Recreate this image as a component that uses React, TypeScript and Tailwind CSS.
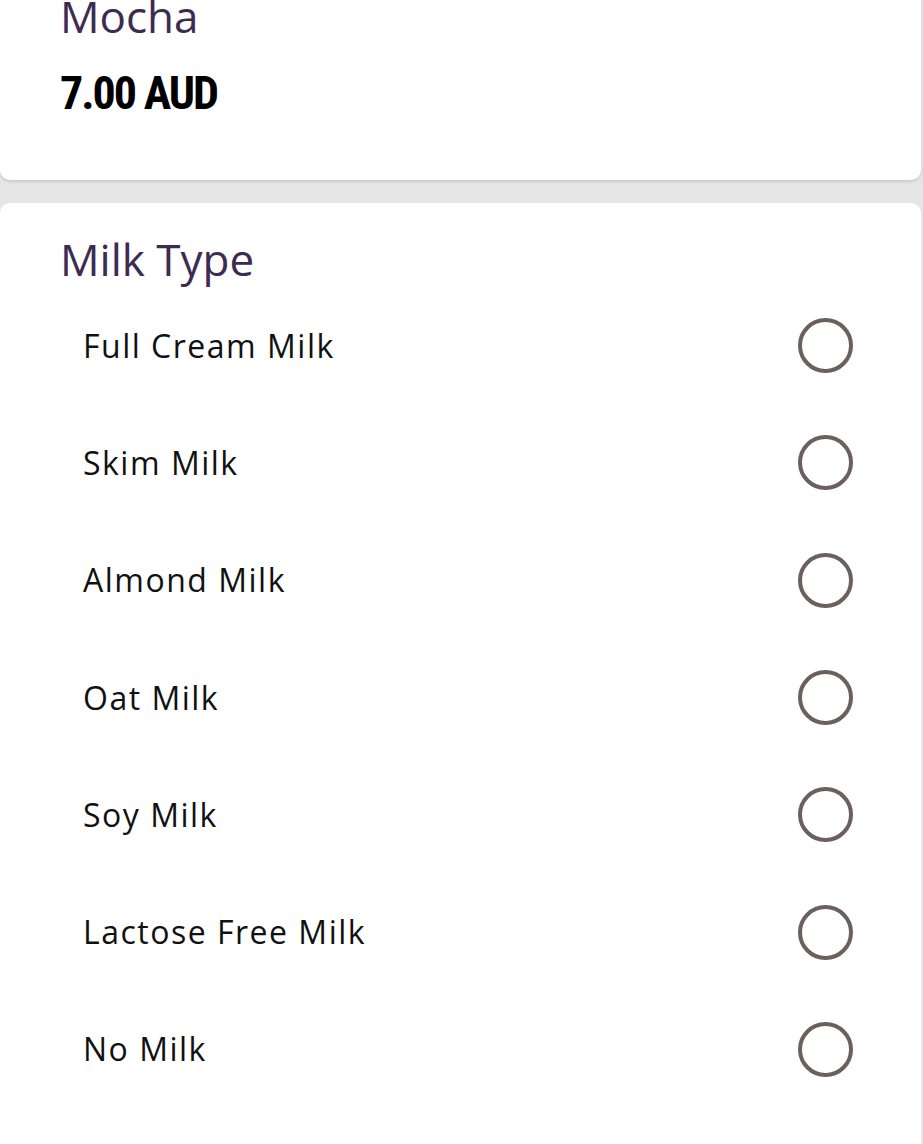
const MILKS = [
  "Full Cream Milk",
  "Skim Milk",
  "Almond Milk",
  "Oat Milk",
  "Soy Milk",
  "Lactose Free Milk",
  "No Milk",
];

export default function App() {
  return (
    <div className="min-h-[1144px] bg-[#e6e6e6] font-['Open_Sans','Liberation_Sans',sans-serif] overflow-hidden">
      <div className="mr-[2px] -mt-[6px] rounded-b-[10px] bg-white pl-[60px] pb-[64px] shadow-[0_2px_3px_rgba(0,0,0,0.12)]">
        <h1 className="text-[44px] leading-[44px] text-[#3d2b52]">Mocha</h1>
        <p className="mt-[32px] font-['Liberation_Sans_Narrow','Roboto_Condensed','Liberation_Sans',sans-serif] text-[46px] font-bold leading-[46px] tracking-[-2px] text-black">
          7.00 AUD
        </p>
      </div>

      <div className="mt-[23px] mr-[2px] min-h-[960px] rounded-t-[10px] bg-white pt-[34px]">
        <h2 className="pl-[60px] text-[44px] leading-[44px] text-[#3d2b52]">Milk Type</h2>
        <ul className="mt-[6px]">
          {MILKS.map((m) => (
            <li key={m} className="flex h-[117.3px] items-center justify-between pl-[83px] pr-[68px]">
              <span className="text-[32px] tracking-[1.5px] text-[#111111]">{m}</span>
              <span className="block h-[55px] w-[55px] rounded-full border-[4px] border-[#6b605c]" />
            </li>
          ))}
        </ul>
      </div>
    </div>
  );
}
